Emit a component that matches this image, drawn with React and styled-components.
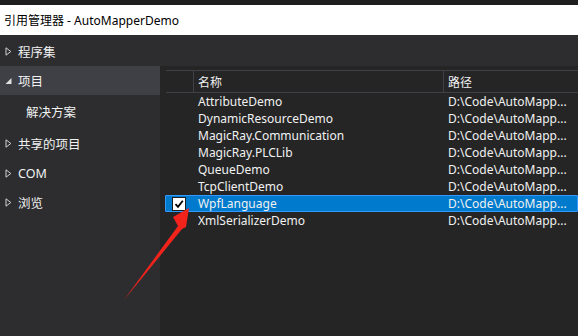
import React from "react";
import styled, { createGlobalStyle } from "styled-components";

const GlobalStyle = createGlobalStyle`
  html, body { margin: 0; padding: 0; background: #2d2d30; }
  body {
    font-family: "Noto Sans", "Noto Sans CJK SC", sans-serif;
    font-size: 12px;
    color: #f1f1f1;
    overflow: hidden;
  }
`;

const Window = styled.div`
  position: relative;
  width: 578px;
  height: 336px;
  display: flex;
  flex-direction: column;
  overflow: hidden;
`;

const TopStrip = styled.div`
  height: 5px;
  background: #1e1e1e;
`;

const TitleBar = styled.div`
  height: 30px;
  background: #ffffff;
  color: #000;
  display: flex;
  align-items: center;
  padding-left: 4px;
  font-size: 12px;
`;

const Body = styled.div`
  flex: 1;
  display: flex;
  min-height: 0;
`;

const Sidebar = styled.div`
  width: 160px;
  background: #2d2d30;
  padding-top: 2px;
  display: flex;
  flex-direction: column;
`;

const NavRow = styled.div`
  height: ${(p) => p.$h || 29}px;
  display: flex;
  align-items: center;
  padding-left: ${(p) => (p.$sub ? 26 : 5)}px;
  gap: 6px;
  background: ${(p) => (p.$active ? "#3f3f46" : "transparent")};
  font-size: 12.5px;
`;

const Tri = styled.svg`
  width: 7px;
  height: 9px;
  flex: none;
`;

const Main = styled.div`
  flex: 1;
  min-width: 0;
  background: #2d2d30;
  padding-top: 31px;
  display: flex;
  flex-direction: column;
`;

const List = styled.div`
  flex: 1;
  background: #252526;
  padding: 4px 0 0 5px;
`;

const Header = styled.div`
  display: grid;
  grid-template-columns: 27px 250px minmax(0, 1fr);
  height: 21px;
  border-top: 1px solid #3f3f46;
  border-bottom: 1px solid #3f3f46;
  margin-left: 1px;
`;

const HeadCell = styled.div`
  display: flex;
  align-items: center;
  padding-left: 4px;
  border-left: ${(p) => (p.$first ? "none" : "1px solid #3f3f46")};
  white-space: nowrap;
  overflow: hidden;
`;

const Row = styled.div`
  display: grid;
  grid-template-columns: 28px 250px minmax(0, 1fr);
  height: 17px;
  box-sizing: border-box;
  align-items: center;
  background: ${(p) => (p.$sel ? "#007acc" : "transparent")};
  border: 1px solid ${(p) => (p.$sel ? "#3399ff" : "transparent")};
  border-radius: 1px;
`;

const Cell = styled.div`
  padding-left: 4px;
  white-space: nowrap;
  overflow: hidden;
  line-height: 15px;
`;

const CheckCell = styled.div`
  display: flex;
  align-items: center;
  padding-left: 6px;
`;

const Box = styled.div`
  width: 12px;
  height: 12px;
  background: #fff;
  border: 1px solid #1e1e1e;
  display: flex;
  align-items: center;
  justify-content: center;
`;

const Arrow = styled.svg`
  position: absolute;
  left: 0;
  top: 0;
  pointer-events: none;
`;

const Collapsed = () => (
  <Tri viewBox="0 0 7 9">
    <path d="M1 0.8 L5.8 4.5 L1 8.2 Z" fill="none" stroke="#d0d0d0" strokeWidth="1" />
  </Tri>
);

const Expanded = () => (
  <Tri viewBox="0 0 7 9">
    <path d="M0.5 8 L6.5 8 L6.5 2 Z" fill="#e0e0e0" />
  </Tri>
);

const projects = [
  "AttributeDemo",
  "DynamicResourceDemo",
  "MagicRay.Communication",
  "MagicRay.PLCLib",
  "QueueDemo",
  "TcpClientDemo",
  "WpfLanguage",
  "XmlSerializerDemo",
];

const PATH_SHOWN = "D:\\Code\\AutoMapp...";

export default function App() {
  return (
    <>
      <GlobalStyle />
      <Window>
        <TopStrip />
        <TitleBar>引用管理器 - AutoMapperDemo</TitleBar>
        <Body>
          <Sidebar>
            <NavRow><Collapsed />程序集</NavRow>
            <NavRow $active><Expanded />项目</NavRow>
            <NavRow $sub $h={33}>解决方案</NavRow>
            <NavRow $h={31}><Collapsed />共享的项目</NavRow>
            <NavRow><Collapsed />COM</NavRow>
            <NavRow><Collapsed />浏览</NavRow>
          </Sidebar>
          <Main>
            <List>
              <Header>
                <HeadCell $first />
                <HeadCell>名称</HeadCell>
                <HeadCell>路径</HeadCell>
              </Header>
              {projects.map((name) => {
                const sel = name === "WpfLanguage";
                return (
                  <Row key={name} $sel={sel}>
                    <CheckCell>
                      {sel && (
                        <Box>
                          <svg width="10" height="10" viewBox="0 0 10 10">
                            <path d="M1.5 5.2 L4 7.8 L8.8 1.8" fill="none" stroke="#000" strokeWidth="1.8" />
                          </svg>
                        </Box>
                      )}
                    </CheckCell>
                    <Cell>{name}</Cell>
                    <Cell>{PATH_SHOWN}</Cell>
                  </Row>
                );
              })}
            </List>
          </Main>
        </Body>
        <Arrow width="578" height="336" viewBox="0 0 578 336">
          <path d="M124 300 L178 226 L173 217 L189 208 L186 227 L182 229 Z" fill="#f2231b" />
        </Arrow>
      </Window>
    </>
  );
}
